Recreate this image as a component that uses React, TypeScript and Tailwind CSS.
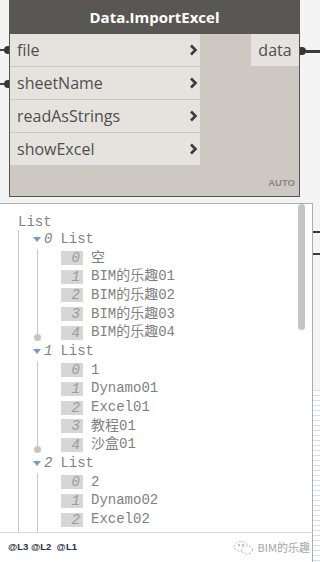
import React from 'react';

const inputs = ['file', 'sheetName', 'readAsStrings', 'showExcel'];

const lists = [
  { label: '0', items: ['空', 'BIM的乐趣01', 'BIM的乐趣02', 'BIM的乐趣03', 'BIM的乐趣04'], open: false },
  { label: '1', items: ['1', 'Dynamo01', 'Excel01', '教程01', '沙盒01'], open: false },
  { label: '2', items: ['2', 'Dynamo02', 'Excel02'], open: true },
];

const Chevron = () => (
  <svg width="9" height="12" viewBox="0 0 9 12">
    <path d="M2 1.5 L6.5 6 L2 10.5" fill="none" stroke="#3b3b3b" strokeWidth="2.6" />
  </svg>
);

const Caret = () => (
  <svg width="8" height="5" viewBox="0 0 8 5">
    <path d="M0 0 H8 L4 5 Z" fill="#6a9fd4" />
  </svg>
);

const Port = () => (
  <div className="flex items-center h-[8px]">
    <div className="w-[4px] h-[2px] bg-[#444]" />
    <div className="w-[5px] h-[8px] rounded-l-full bg-[#363636]" />
  </div>
);

const WeChat = () => (
  <svg width="22" height="16" viewBox="0 0 22 16" fill="none" stroke="#b9b9b9" strokeWidth="1">
    <ellipse cx="8" cy="6.5" rx="6.5" ry="5" strokeDasharray="2 1.5" />
    <ellipse cx="14" cy="10" rx="5.5" ry="4.2" fill="#fff" strokeDasharray="2 1.5" />
    <circle cx="6" cy="5" r="0.8" fill="#b9b9b9" />
    <circle cx="10" cy="5" r="0.8" fill="#b9b9b9" />
  </svg>
);

const SubList = ({ label, items, open }: { label: string; items: string[]; open: boolean }) => (
  <div>
    <div className="h-[18.7px] flex items-center pl-[14px]">
      <Caret />
      <span className="italic ml-[3px]">{label}</span>
      <span className="ml-[8px]">List</span>
    </div>
    <div className={`relative ml-[18px] pl-[24px] ${open ? 'pb-[12px]' : ''}`}>
      <div className={`absolute left-0 top-0 w-px bg-[#c8c8c8] ${open ? 'bottom-0' : 'bottom-[4px]'}`} />
      {!open && <div className="absolute left-[-3px] bottom-[1px] w-[7px] h-[7px] rounded-full bg-[#c4c4c4]" />}
      {items.map((it, i) => (
        <div key={i} className="h-[18.7px] flex items-center">
          <span className="w-[22px] h-[14px] bg-[#d6d6d6] text-right pr-[3px] italic text-[#9b9b9b] leading-[14px]">{i}</span>
          <span className="ml-[8px] whitespace-nowrap">{it}</span>
        </div>
      ))}
    </div>
  </div>
);

export default function App() {
  return (
    <div className="w-[320px] h-[562px] bg-[#f4f4f4] overflow-hidden font-['Open_Sans',sans-serif]">
      {/* Node */}
      <div className="flex h-[197px]">
        <div className="w-[9px] flex flex-col pt-[46px] gap-[26px]">
          <Port />
          <Port />
        </div>
        <div className="w-[291px] h-[197px] flex flex-col bg-[#cdc9c2] border-x border-b border-[#57544f]">
          <div className="h-[34px] bg-[#595753] flex items-center justify-center text-white font-bold text-[15px]">
            Data.ImportExcel
          </div>
          <div className="flex-1 flex">
            <div className="w-[190px] flex flex-col gap-px">
              {inputs.map((n) => (
                <div key={n} className="h-[32px] bg-[#e6e3de] flex items-center justify-between pl-[7px] pr-[2px] text-[16px] text-[#4f4f4f]">
                  <span>{n}</span>
                  <Chevron />
                </div>
              ))}
            </div>
            <div className="flex-1 flex flex-col items-end">
              <div className="w-[48px] h-[32px] bg-[#e6e3de] flex items-center justify-center text-[16px] text-[#4f4f4f]">
                data
              </div>
              <div className="flex-1" />
              <div className="text-[9.5px] leading-[12px] font-bold text-[#8b867e] pr-[4px] pb-[7px] font-['Liberation_Sans',sans-serif]">
                AUTO
              </div>
            </div>
          </div>
        </div>
        <div className="flex-1 flex items-start pt-[47px]">
          <div className="w-[6px] h-[8px] rounded-r-full bg-[#363636]" />
          <div className="flex-1 h-[3px] mt-[3px] bg-[#3a3a3a]" />
        </div>
      </div>

      {/* Watch panel */}
      <div className="flex mt-[6px]">
        <div className="w-[313px] h-[359px] flex flex-col bg-white border-t border-r border-[#aeaeae]">
          <div className="relative h-[328px] overflow-hidden font-['Liberation_Mono','Noto_Sans_CJK_SC',monospace] text-[14px] text-[#7f7f7f]">
            <div className="pl-[18px] mt-[11px] h-[15px] leading-[15px]">List</div>
            <div className="ml-[18px] border-l border-[#c8c8c8]">
              {lists.map((l) => (
                <SubList key={l.label} {...l} />
              ))}
            </div>
            <div className="absolute right-[7px] top-0 w-[7px] h-[126px] rounded-full bg-[#c4c4c4]" />
          </div>
          <div className="h-[30px] border-t border-[#d6d6d6] flex items-center justify-between pl-[8px] pr-[2px]">
            <span className="font-['Liberation_Sans',sans-serif] font-bold text-[9.5px] text-[#27303f] whitespace-pre">@L3 @L2  @L1</span>
            <div className="flex items-center gap-[3px]">
              <WeChat />
              <span className="font-['Noto_Sans_CJK_SC',sans-serif] text-[11px] text-[#a5a5a5]">BIM的乐趣</span>
            </div>
          </div>
        </div>
        <div className="flex-1 flex flex-col">
          <div className="h-[2px] mt-[28px] bg-[#3a3a3a]" />
          <div className="h-[2px] mt-[20px] bg-[#3a3a3a]" />
          <div className="flex-1 mt-[135px] bg-[repeating-linear-gradient(to_bottom,#cfe0ee_0px,#cfe0ee_1px,#ffffff_1px,#ffffff_5px)]" />
        </div>
      </div>
    </div>
  );
}
